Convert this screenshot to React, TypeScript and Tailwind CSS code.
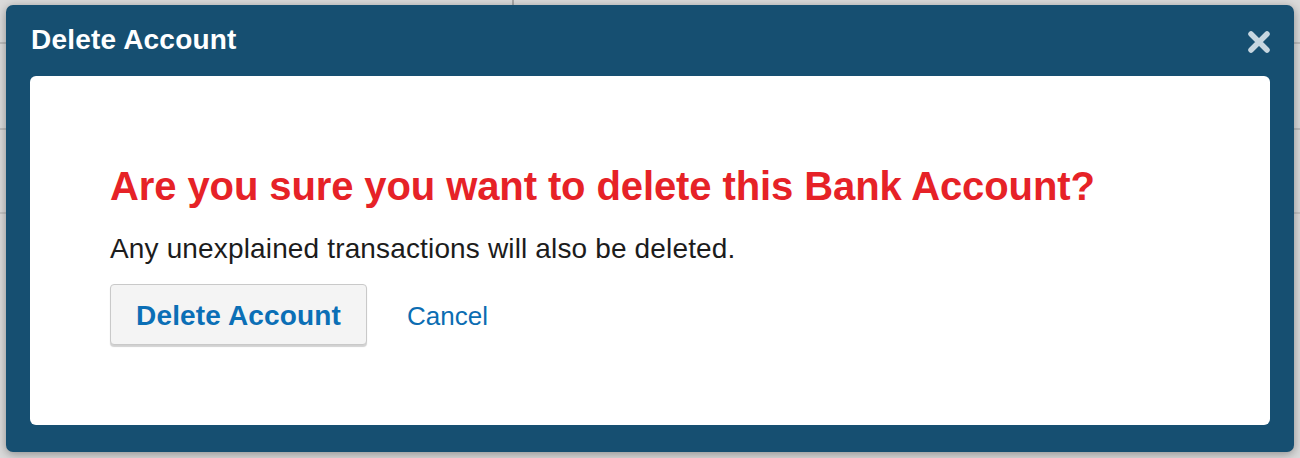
import React from 'react';

const CloseIcon: React.FC = () => (
  <svg width="26" height="26" viewBox="0 0 26 26" aria-hidden="true">
    <path d="M5 5 L21 21 M21 5 L5 21" stroke="#c6d6e0" strokeWidth="5.5" strokeLinecap="round" />
  </svg>
);

const App: React.FC = () => {
  return (
    <div className="relative w-[1300px] h-[458px] overflow-hidden bg-[#dadada] font-['Liberation_Sans',Arial,sans-serif]">
      {/* page behind the overlay */}
      <div className="absolute left-0 top-[42px] w-full h-[2px] bg-[#bdbdbd]" />
      <div className="absolute left-0 top-[128px] w-full h-[2px] bg-[#bdbdbd]" />
      <div className="absolute left-0 top-[212px] w-full h-[2px] bg-[#c4c4c4]" />
      <div className="absolute left-[512px] top-0 w-[2px] h-[10px] bg-[#a8a8a8]" />

      <div className="relative pl-[6px] pt-[5px]">
        <div className="w-[1288px] h-[447px] rounded-[7px] bg-[#164f71] shadow-[0_2px_10px_rgba(0,0,0,0.35)] flex flex-col px-[24px] pb-[27px]">
          <div className="flex items-start justify-between h-[71px] pt-[19px]">
            <h2 className="pl-[1px] text-[28px] leading-[32px] font-bold text-white tracking-[0.2px]">Delete Account</h2>
            <button className="mt-[5px] mr-[-2px]">
              <CloseIcon />
            </button>
          </div>

          <div className="flex-1 rounded-[6px] bg-white pl-[80px] pt-[86px]">
            <h1 className="text-[40px] leading-[48px] font-bold text-[#e62227] tracking-[-0.1px]">
              Are you sure you want to delete this Bank Account?
            </h1>
            <p className="mt-[22px] text-[28px] leading-[34px] text-[#1c1c1c] tracking-[0.15px]">
              Any unexplained transactions will also be deleted.
            </p>
            <div className="mt-[18px] flex items-center gap-[40px]">
              <button className="w-[257px] h-[61px] pt-[3px] rounded-[4px] border border-[#c9c9c9] bg-[#f4f4f4] shadow-[0_2px_1px_rgba(0,0,0,0.18)] text-[28px] font-bold text-[#0b6fb6] tracking-[0.15px]">
                Delete Account
              </button>
              <a className="pt-[4px] text-[26px] text-[#0b6db2] cursor-pointer">Cancel</a>
            </div>
          </div>
        </div>
      </div>
    </div>
  );
};

export default App;
